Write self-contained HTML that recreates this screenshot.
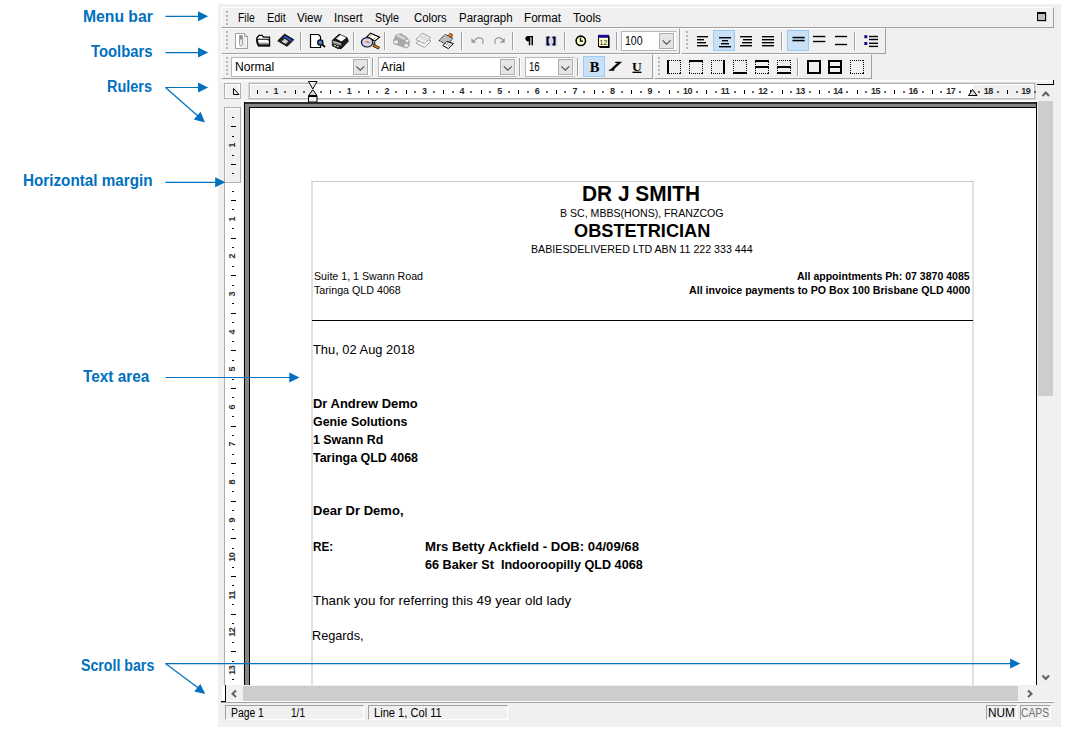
<!DOCTYPE html>
<html><head><meta charset="utf-8">
<style>
*{box-sizing:border-box}
html,body{margin:0;padding:0}
body{width:1065px;height:732px;background:#fff;position:relative;overflow:hidden;font-family:"Liberation Sans",sans-serif}
.a{position:absolute}
.tx{position:absolute;white-space:pre;line-height:1;transform-origin:0 0}
.hl{background:#fff}
.sh{background:#a0a0a0}
.grip{position:absolute;width:2px;}
</style></head><body>
<!-- app frame -->
<div class="a" style="left:218px;top:4px;width:843px;height:723px;background:#f0f0f0"></div>

<!-- menubar band -->
<div class="a" style="left:221px;top:7px;width:833px;height:21px;border-top:1px solid #fff;border-left:1px solid #fff;border-bottom:1px solid #a0a0a0;border-right:1px solid #a0a0a0"></div>
<!-- restore icon -->
<div class="a" style="left:1037px;top:12px;width:9px;height:9px;border:1px solid #000;border-top-width:2px;background:#bdbdbd;box-shadow:1px 1px 0 #c8c8c8"></div>

<!-- toolbar row1 -->
<div class="a" style="left:221px;top:28px;width:459px;height:26px;border-top:1px solid #fff;border-left:1px solid #fff;border-bottom:1px solid #a0a0a0;border-right:1px solid #a0a0a0"></div>
<div class="a" style="left:681px;top:28px;width:205px;height:26px;border-top:1px solid #fff;border-left:1px solid #fff;border-bottom:1px solid #a0a0a0;border-right:1px solid #a0a0a0"></div>
<!-- toolbar row2 -->
<div class="a" style="left:221px;top:54px;width:432px;height:25px;border-top:1px solid #fff;border-left:1px solid #fff;border-bottom:1px solid #a0a0a0;border-right:1px solid #a0a0a0"></div>
<div class="a" style="left:654px;top:54px;width:218px;height:25px;border-top:1px solid #fff;border-left:1px solid #fff;border-bottom:1px solid #a0a0a0;border-right:1px solid #a0a0a0"></div>

<div class="a" style="left:226px;top:11px;width:2px;height:2px;background:#b4b4b4;box-shadow:-1px 1px 0 #fafafa"></div>
<div class="a" style="left:226px;top:15px;width:2px;height:2px;background:#b4b4b4;box-shadow:-1px 1px 0 #fafafa"></div>
<div class="a" style="left:226px;top:19px;width:2px;height:2px;background:#b4b4b4;box-shadow:-1px 1px 0 #fafafa"></div>
<div class="a" style="left:226px;top:23px;width:2px;height:2px;background:#b4b4b4;box-shadow:-1px 1px 0 #fafafa"></div>
<div class="a" style="left:226px;top:31px;width:2px;height:2px;background:#b4b4b4;box-shadow:-1px 1px 0 #fafafa"></div>
<div class="a" style="left:226px;top:35px;width:2px;height:2px;background:#b4b4b4;box-shadow:-1px 1px 0 #fafafa"></div>
<div class="a" style="left:226px;top:39px;width:2px;height:2px;background:#b4b4b4;box-shadow:-1px 1px 0 #fafafa"></div>
<div class="a" style="left:226px;top:43px;width:2px;height:2px;background:#b4b4b4;box-shadow:-1px 1px 0 #fafafa"></div>
<div class="a" style="left:226px;top:47px;width:2px;height:2px;background:#b4b4b4;box-shadow:-1px 1px 0 #fafafa"></div>
<div class="a" style="left:686px;top:31px;width:2px;height:2px;background:#b4b4b4;box-shadow:-1px 1px 0 #fafafa"></div>
<div class="a" style="left:686px;top:35px;width:2px;height:2px;background:#b4b4b4;box-shadow:-1px 1px 0 #fafafa"></div>
<div class="a" style="left:686px;top:39px;width:2px;height:2px;background:#b4b4b4;box-shadow:-1px 1px 0 #fafafa"></div>
<div class="a" style="left:686px;top:43px;width:2px;height:2px;background:#b4b4b4;box-shadow:-1px 1px 0 #fafafa"></div>
<div class="a" style="left:686px;top:47px;width:2px;height:2px;background:#b4b4b4;box-shadow:-1px 1px 0 #fafafa"></div>
<div class="a" style="left:226px;top:57px;width:2px;height:2px;background:#b4b4b4;box-shadow:-1px 1px 0 #fafafa"></div>
<div class="a" style="left:226px;top:61px;width:2px;height:2px;background:#b4b4b4;box-shadow:-1px 1px 0 #fafafa"></div>
<div class="a" style="left:226px;top:65px;width:2px;height:2px;background:#b4b4b4;box-shadow:-1px 1px 0 #fafafa"></div>
<div class="a" style="left:226px;top:69px;width:2px;height:2px;background:#b4b4b4;box-shadow:-1px 1px 0 #fafafa"></div>
<div class="a" style="left:226px;top:73px;width:2px;height:2px;background:#b4b4b4;box-shadow:-1px 1px 0 #fafafa"></div>
<div class="a" style="left:658px;top:57px;width:2px;height:2px;background:#b4b4b4;box-shadow:-1px 1px 0 #fafafa"></div>
<div class="a" style="left:658px;top:61px;width:2px;height:2px;background:#b4b4b4;box-shadow:-1px 1px 0 #fafafa"></div>
<div class="a" style="left:658px;top:65px;width:2px;height:2px;background:#b4b4b4;box-shadow:-1px 1px 0 #fafafa"></div>
<div class="a" style="left:658px;top:69px;width:2px;height:2px;background:#b4b4b4;box-shadow:-1px 1px 0 #fafafa"></div>
<div class="a" style="left:658px;top:73px;width:2px;height:2px;background:#b4b4b4;box-shadow:-1px 1px 0 #fafafa"></div>

<!-- separators -->
<div class="a" style="left:300px;top:32px;width:1px;height:18px;background:#a0a0a0"></div><div class="a" style="left:301px;top:32px;width:1px;height:18px;background:#fff"></div>
<div class="a" style="left:353px;top:32px;width:1px;height:18px;background:#a0a0a0"></div><div class="a" style="left:354px;top:32px;width:1px;height:18px;background:#fff"></div>
<div class="a" style="left:384px;top:32px;width:1px;height:18px;background:#a0a0a0"></div><div class="a" style="left:385px;top:32px;width:1px;height:18px;background:#fff"></div>
<div class="a" style="left:461px;top:32px;width:1px;height:18px;background:#a0a0a0"></div><div class="a" style="left:462px;top:32px;width:1px;height:18px;background:#fff"></div>
<div class="a" style="left:512px;top:32px;width:1px;height:18px;background:#a0a0a0"></div><div class="a" style="left:513px;top:32px;width:1px;height:18px;background:#fff"></div>
<div class="a" style="left:564px;top:32px;width:1px;height:18px;background:#a0a0a0"></div><div class="a" style="left:565px;top:32px;width:1px;height:18px;background:#fff"></div>
<div class="a" style="left:616px;top:32px;width:1px;height:18px;background:#a0a0a0"></div><div class="a" style="left:617px;top:32px;width:1px;height:18px;background:#fff"></div>
<div class="a" style="left:781px;top:32px;width:1px;height:18px;background:#a0a0a0"></div><div class="a" style="left:782px;top:32px;width:1px;height:18px;background:#fff"></div>
<div class="a" style="left:854px;top:32px;width:1px;height:18px;background:#a0a0a0"></div><div class="a" style="left:855px;top:32px;width:1px;height:18px;background:#fff"></div>
<div class="a" style="left:372px;top:58px;width:1px;height:18px;background:#a0a0a0"></div><div class="a" style="left:373px;top:58px;width:1px;height:18px;background:#fff"></div>
<div class="a" style="left:519px;top:58px;width:1px;height:18px;background:#a0a0a0"></div><div class="a" style="left:520px;top:58px;width:1px;height:18px;background:#fff"></div>
<div class="a" style="left:577px;top:58px;width:1px;height:18px;background:#a0a0a0"></div><div class="a" style="left:578px;top:58px;width:1px;height:18px;background:#fff"></div>
<div class="a" style="left:797px;top:58px;width:1px;height:18px;background:#a0a0a0"></div><div class="a" style="left:798px;top:58px;width:1px;height:18px;background:#fff"></div>

<!-- combos -->
<div class="a" style="left:621px;top:31px;width:56px;height:20px;background:#fff;border:1px solid #b4b8c0;border-right-color:#e8e8e8"></div>
<div class="a" style="left:659px;top:33px;width:15px;height:16px;background:#e5e5e5;border:1px solid #adadad"></div>

<div class="a" style="left:231px;top:57px;width:140px;height:20px;background:#fff;border:1px solid #b4b8c0;border-right-color:#e8e8e8"></div>
<div class="a" style="left:353px;top:59px;width:15px;height:16px;background:#e5e5e5;border:1px solid #adadad"></div>
<div class="a" style="left:378px;top:57px;width:139px;height:20px;background:#fff;border:1px solid #b4b8c0;border-right-color:#e8e8e8"></div>
<div class="a" style="left:500px;top:59px;width:15px;height:16px;background:#e5e5e5;border:1px solid #adadad"></div>
<div class="a" style="left:525px;top:57px;width:50px;height:20px;background:#fff;border:1px solid #b4b8c0;border-right-color:#e8e8e8"></div>
<div class="a" style="left:558px;top:59px;width:15px;height:16px;background:#e5e5e5;border:1px solid #adadad"></div>
<svg class="a" style="left:0;top:0" width="1065" height="100">
 <g fill="none" stroke="#505050" stroke-width="1.1">
  <polyline points="662.6,40.3 666.6,44.2 670.6,40.3"/>
  <polyline points="356.3,66.3 360.3,70.2 364.3,66.3"/>
  <polyline points="503.8,66.3 507.8,70.2 511.8,66.3"/>
  <polyline points="561.3,66.3 565.3,70.2 569.3,66.3"/>
 </g>
</svg>

<!-- pressed buttons -->
<div class="a" style="left:713px;top:30px;width:22px;height:21px;background:#c9e0f7;border:1px solid #99ccf5"></div>
<div class="a" style="left:787px;top:30px;width:22px;height:21px;background:#c9e0f7;border:1px solid #99ccf5"></div>
<div class="a" style="left:583px;top:56px;width:22px;height:21px;background:#c9e0f7;border:1px solid #99ccf5"></div>

<svg class="a" style="left:0;top:0" width="1065" height="110" shape-rendering="geometricPrecision">
 <!-- new doc -->
 <path d="M235.5,33.5 H244.5 L247.5,36.5 V48.5 H235.5 Z" fill="#fff" stroke="#a0a0a0"/>
 <path d="M244.5,33.5 V36.5 H247.5" fill="none" stroke="#a0a0a0"/>
 <rect x="243" y="37" width="3.5" height="11" fill="#ececec"/>
 <path d="M239.5,35.5 H242.5 V44.5 L241,46.5 L239.5,44.5 Z" fill="#e8e8e8" stroke="#a0a0a0"/>
 <rect x="240" y="36" width="2" height="3.5" fill="#909090"/>
 <!-- open folder -->
 <path d="M256.8,38 L259,35.3 H262 L263.5,37.2 H269.5 V45.8 H258.5 L256.8,42 Z" fill="#fff" stroke="#000" stroke-width="1.3"/>
 <defs><linearGradient id="fg" x1="0" y1="0" x2="0" y2="1"><stop offset="0.4" stop-color="#fff"/><stop offset="1" stop-color="#000"/></linearGradient>
 <linearGradient id="fg2" x1="0" y1="0" x2="0" y2="1"><stop offset="0" stop-color="#ffffff"/><stop offset="1" stop-color="#202020"/></linearGradient></defs>
 <path d="M257.3,39.3 H268 L269.5,41 V45.8 H258.5 Z" fill="url(#fg)" stroke="#000" stroke-width="1.1"/>
 <!-- save disk -->
 <path d="M277.8,40.8 L284.5,34.2 L293.7,39.7 L287.1,46.3 Z" fill="#222" stroke="#000" stroke-width="1"/>
 <path d="M284.6,35.8 L292,40.2 L291,41.2 L283.6,36.8 Z" fill="#2a5cff"/>
 <path d="M281.5,41.5 L284.5,38.8 L288.5,41.3 L285.6,44 Z" fill="#ccc"/>
 <!-- print preview -->
 <path d="M310.5,34.5 H318.5 L320.5,36.5 V47.5 H310.5 Z" fill="#fff" stroke="#000" stroke-width="1.2"/>
 <circle cx="320.3" cy="42.4" r="2.6" fill="#4a78d8" stroke="#000" stroke-width="1.2"/>
 <line x1="322.2" y1="44.3" x2="325" y2="47" stroke="#000" stroke-width="1.8"/>
 <!-- printer -->
 <path d="M332.3,40.2 L339.2,34.2 L347.2,37.8 L348.3,41.3 L341.4,48.6 L338,48.6 L332.3,45.7 Z" fill="#1a1a1a" stroke="#000" stroke-width=".8"/>
 <path d="M332.6,40.4 L341.3,43.2 L341.3,46 L332.6,43.4 Z" fill="#8a8a8a"/>
 <path d="M333.5,41.5 L340.5,43.8" stroke="#d8d8d8" stroke-width=".8"/>
 <path d="M336,38.6 L340.6,34.9 L346.2,37.7 L341.5,41.4 Z" fill="#fff"/>
 <path d="M334,45.3 L335.8,46 M336.8,46.2 L338.6,46.9" stroke="#e8e8e8" stroke-width="1.2"/>
 <!-- find -->
 <path d="M367,36.6 L370.6,33.2 L379.6,37.2 L374.8,41.1 Z" fill="#fff" stroke="#000" stroke-width="1.1"/>
 <rect x="370" y="34.9" width="1.3" height="1.3" fill="#f09010"/><rect x="373.8" y="37.8" width="1.3" height="1.3" fill="#f09010"/>
 <path d="M374.5,42 V45" stroke="#444" stroke-width="1.8"/>
 <ellipse cx="367.1" cy="42.3" rx="5.7" ry="4.7" fill="#c8c8f6" stroke="#111" stroke-width="1.2"/>
 <path d="M363,40.2 H371 M363,44.2 H371" stroke="#ececff" stroke-width=".8"/>
 <path d="M366,41.3 L369.3,42.8" stroke="#f08a10" stroke-width="1.5"/>
 <path d="M373,45.2 L379.3,48.3" stroke="#000" stroke-width="2.8"/>
 <path d="M373.3,45.3 L379,48.1" stroke="#f08a10" stroke-width="1.4"/>
 <!-- cut (gray) -->
 <path d="M396,34.3 L401,33.3 L407,37 L409.8,41.2 L409.8,45.8 L406.5,48.5 L400.5,46.5 L393.3,43.8 L393.3,39.8 Z" fill="#a8a8a8"/>
 <path d="M396.5,35.5 L404.5,39.5 M397.5,34.5 L405.5,38.5" stroke="#f0f0f0" stroke-width=".9"/>
 <ellipse cx="396" cy="42" rx="2.6" ry="2.1" fill="#f0f0f0" stroke="#a0a0a0" stroke-width=".8"/>
 <ellipse cx="406.2" cy="45.5" rx="2.4" ry="2" fill="#f0f0f0" stroke="#a0a0a0" stroke-width=".8"/>
 <ellipse cx="407" cy="41" rx="1.5" ry="1.2" fill="#f0f0f0"/>
 <!-- copy (gray) -->
 <path d="M416,43.2 L422.5,37 L431,41 L424.5,47.5 Z" fill="#f4f4f4" stroke="#a0a0a0" stroke-width="1"/>
 <path d="M416,39.5 L422.2,33.2 L430.7,37.4 L424.3,43.6 Z" fill="#f4f4f4" stroke="#a0a0a0" stroke-width="1"/>
 <path d="M420,38.3 L423,35.6 M421.8,39.6 L425.6,36.3 M423.5,41 L427.5,37.5" stroke="#b0b0b0" stroke-width=".9"/>
 <!-- paste -->
 <path d="M439,40.5 L445.1,34.3 L453,38.4 L446.9,44.8 Z" fill="#bdbdbd" stroke="#111" stroke-width="1" stroke-dasharray="1.2 .6"/>
 <path d="M448.3,35.5 L450,33.2 L452.6,34.6 L451.8,37.3 L449.5,36.8 Z" fill="#f07a10" stroke="#301000" stroke-width=".6"/>
 <path d="M442.8,45.6 L446.9,41.5 L453.4,43.5 L448.4,48.6 Z" fill="#fff" stroke="#000" stroke-width="1"/>
 <path d="M446,45.2 L448.5,42.8 M448,46.3 L450.6,43.8" stroke="#555" stroke-width=".8"/>
 <!-- undo/redo gray -->
 <g fill="none" stroke="#999" stroke-width="1.15">
  <path d="M474,41 C477,37 481,36.5 483,40 C483.5,41.5 483,42.8 482.3,43.8"/>
  <path d="M504,41 C501,37 497,36.5 495,40 C494.5,41.5 495,42.8 495.7,43.8"/>
 </g>
 <path d="M471.4,37.9 V42.8 H476.4 Z" fill="#999"/>
 <path d="M504.7,37.9 V42.8 H499.7 Z" fill="#999"/>
 <!-- pilcrow -->
 <path d="M527.5,36 H533 V45.2 H531.5 V37.3 H530.3 V45.2 H528.8 V41.3 A2.7,2.65 0 0 1 527.5,36 Z" fill="#000"/>
 <!-- brackets -->
 <rect x="545" y="36" width="12" height="10" fill="#d4d4ff"/>
 <path d="M549.5,37.5 H547.5 V44.5 H549.5 M552.5,37.5 H554.5 V44.5 H552.5" fill="none" stroke="#000" stroke-width="2"/>
 <!-- clock -->
 <circle cx="580.8" cy="40.8" r="4.7" fill="#ffffc8" stroke="#000" stroke-width="1.6"/>
 <path d="M580.5,37.8 V41.2 H583" fill="none" stroke="#000" stroke-width="1.3"/>
 <!-- calendar -->
 <rect x="598.5" y="35.5" width="10" height="11" fill="#ffffc8" stroke="#000"/>
 <rect x="598" y="34.8" width="11" height="3" fill="#1e0a98"/>
 <path d="M609,36 V47.5 H599.5" fill="none" stroke="#000" stroke-width="1.2"/>
 <text x="603.5" y="45" font-family="Liberation Sans" font-size="7" text-anchor="middle" fill="#222">12</text>
 <!-- align icons -->
 <g fill="#000">
  <rect x="697" y="36" width="11" height="1.4"/><rect x="697" y="39" width="7" height="1.4"/><rect x="697" y="42" width="9" height="1.4"/><rect x="697" y="45" width="11" height="1.4"/>
  <rect x="719" y="37" width="12" height="1.4"/><rect x="722" y="40" width="6" height="1.4"/><rect x="721" y="43" width="8" height="1.4"/><rect x="719" y="46" width="12" height="1.4"/>
  <rect x="740" y="36" width="12" height="1.4"/><rect x="743" y="39" width="9" height="1.4"/><rect x="742" y="42" width="10" height="1.4"/><rect x="740" y="45" width="12" height="1.4"/>
  <rect x="762" y="36" width="12" height="1.4"/><rect x="762" y="39" width="12" height="1.4"/><rect x="762" y="42" width="12" height="1.4"/><rect x="762" y="45" width="12" height="1.4"/>
  <rect x="792.5" y="36.8" width="12.2" height="1.5"/><rect x="792.5" y="39.8" width="12.2" height="1.5"/>
  <rect x="813" y="35.8" width="12.3" height="1.4"/><rect x="813" y="40.8" width="12.3" height="1.4"/>
  <rect x="835" y="35.8" width="12" height="1.4"/><rect x="835" y="43.8" width="12" height="1.4"/>
  <rect x="869" y="35.8" width="9" height="1.4"/><rect x="869" y="38.8" width="9" height="1.4"/><rect x="869" y="42.6" width="9" height="1.4"/><rect x="869" y="45.7" width="9" height="1.4"/>
 </g>
 <rect x="864.3" y="35.2" width="3" height="3" fill="#1a0a8a"/><rect x="864.3" y="42" width="3" height="3" fill="#1a0a8a"/>
 <!-- B I U -->
 <text x="594.6" y="71.8" font-family="Liberation Serif" font-weight="bold" font-size="14.5" text-anchor="middle" fill="#000">B</text>
 <path d="M615.3,61.7 H621.7 L621.2,63 H620.8 L613.8,69.6 H614.6 L614.2,70.8 H608.7 L609.2,69.6 H610.3 L617.3,63 H615 Z" fill="#000"/>
 <text x="636.8" y="70.8" font-family="Liberation Serif" font-weight="bold" font-size="13.5" text-anchor="middle" fill="#000">U</text>
 <rect x="632.5" y="71.6" width="9" height="1.4" fill="#000"/>
 <!-- border icons -->
 <g shape-rendering="crispEdges"><rect x="667" y="60" width="1" height="1" fill="#000"/><rect x="667" y="73" width="1" height="1" fill="#000"/><rect x="667" y="60" width="1" height="1" fill="#000"/><rect x="680" y="60" width="1" height="1" fill="#000"/><rect x="669" y="60" width="1" height="1" fill="#000"/><rect x="669" y="73" width="1" height="1" fill="#000"/><rect x="667" y="62" width="1" height="1" fill="#000"/><rect x="680" y="62" width="1" height="1" fill="#000"/><rect x="671" y="60" width="1" height="1" fill="#000"/><rect x="671" y="73" width="1" height="1" fill="#000"/><rect x="667" y="64" width="1" height="1" fill="#000"/><rect x="680" y="64" width="1" height="1" fill="#000"/><rect x="673" y="60" width="1" height="1" fill="#000"/><rect x="673" y="73" width="1" height="1" fill="#000"/><rect x="667" y="66" width="1" height="1" fill="#000"/><rect x="680" y="66" width="1" height="1" fill="#000"/><rect x="675" y="60" width="1" height="1" fill="#000"/><rect x="675" y="73" width="1" height="1" fill="#000"/><rect x="667" y="68" width="1" height="1" fill="#000"/><rect x="680" y="68" width="1" height="1" fill="#000"/><rect x="677" y="60" width="1" height="1" fill="#000"/><rect x="677" y="73" width="1" height="1" fill="#000"/><rect x="667" y="70" width="1" height="1" fill="#000"/><rect x="680" y="70" width="1" height="1" fill="#000"/><rect x="679" y="60" width="1" height="1" fill="#000"/><rect x="679" y="73" width="1" height="1" fill="#000"/><rect x="667" y="72" width="1" height="1" fill="#000"/><rect x="680" y="72" width="1" height="1" fill="#000"/><rect x="680" y="73" width="1" height="1" fill="#000"/><rect x="667" y="60" width="2" height="14" fill="#000"/><rect x="689" y="60" width="1" height="1" fill="#000"/><rect x="689" y="73" width="1" height="1" fill="#000"/><rect x="689" y="60" width="1" height="1" fill="#000"/><rect x="702" y="60" width="1" height="1" fill="#000"/><rect x="691" y="60" width="1" height="1" fill="#000"/><rect x="691" y="73" width="1" height="1" fill="#000"/><rect x="689" y="62" width="1" height="1" fill="#000"/><rect x="702" y="62" width="1" height="1" fill="#000"/><rect x="693" y="60" width="1" height="1" fill="#000"/><rect x="693" y="73" width="1" height="1" fill="#000"/><rect x="689" y="64" width="1" height="1" fill="#000"/><rect x="702" y="64" width="1" height="1" fill="#000"/><rect x="695" y="60" width="1" height="1" fill="#000"/><rect x="695" y="73" width="1" height="1" fill="#000"/><rect x="689" y="66" width="1" height="1" fill="#000"/><rect x="702" y="66" width="1" height="1" fill="#000"/><rect x="697" y="60" width="1" height="1" fill="#000"/><rect x="697" y="73" width="1" height="1" fill="#000"/><rect x="689" y="68" width="1" height="1" fill="#000"/><rect x="702" y="68" width="1" height="1" fill="#000"/><rect x="699" y="60" width="1" height="1" fill="#000"/><rect x="699" y="73" width="1" height="1" fill="#000"/><rect x="689" y="70" width="1" height="1" fill="#000"/><rect x="702" y="70" width="1" height="1" fill="#000"/><rect x="701" y="60" width="1" height="1" fill="#000"/><rect x="701" y="73" width="1" height="1" fill="#000"/><rect x="689" y="72" width="1" height="1" fill="#000"/><rect x="702" y="72" width="1" height="1" fill="#000"/><rect x="702" y="73" width="1" height="1" fill="#000"/><rect x="689" y="60" width="14" height="2" fill="#000"/><rect x="711" y="60" width="1" height="1" fill="#000"/><rect x="711" y="73" width="1" height="1" fill="#000"/><rect x="711" y="60" width="1" height="1" fill="#000"/><rect x="724" y="60" width="1" height="1" fill="#000"/><rect x="713" y="60" width="1" height="1" fill="#000"/><rect x="713" y="73" width="1" height="1" fill="#000"/><rect x="711" y="62" width="1" height="1" fill="#000"/><rect x="724" y="62" width="1" height="1" fill="#000"/><rect x="715" y="60" width="1" height="1" fill="#000"/><rect x="715" y="73" width="1" height="1" fill="#000"/><rect x="711" y="64" width="1" height="1" fill="#000"/><rect x="724" y="64" width="1" height="1" fill="#000"/><rect x="717" y="60" width="1" height="1" fill="#000"/><rect x="717" y="73" width="1" height="1" fill="#000"/><rect x="711" y="66" width="1" height="1" fill="#000"/><rect x="724" y="66" width="1" height="1" fill="#000"/><rect x="719" y="60" width="1" height="1" fill="#000"/><rect x="719" y="73" width="1" height="1" fill="#000"/><rect x="711" y="68" width="1" height="1" fill="#000"/><rect x="724" y="68" width="1" height="1" fill="#000"/><rect x="721" y="60" width="1" height="1" fill="#000"/><rect x="721" y="73" width="1" height="1" fill="#000"/><rect x="711" y="70" width="1" height="1" fill="#000"/><rect x="724" y="70" width="1" height="1" fill="#000"/><rect x="723" y="60" width="1" height="1" fill="#000"/><rect x="723" y="73" width="1" height="1" fill="#000"/><rect x="711" y="72" width="1" height="1" fill="#000"/><rect x="724" y="72" width="1" height="1" fill="#000"/><rect x="724" y="73" width="1" height="1" fill="#000"/><rect x="723" y="60" width="2" height="14" fill="#000"/><rect x="733" y="60" width="1" height="1" fill="#000"/><rect x="733" y="73" width="1" height="1" fill="#000"/><rect x="733" y="60" width="1" height="1" fill="#000"/><rect x="746" y="60" width="1" height="1" fill="#000"/><rect x="735" y="60" width="1" height="1" fill="#000"/><rect x="735" y="73" width="1" height="1" fill="#000"/><rect x="733" y="62" width="1" height="1" fill="#000"/><rect x="746" y="62" width="1" height="1" fill="#000"/><rect x="737" y="60" width="1" height="1" fill="#000"/><rect x="737" y="73" width="1" height="1" fill="#000"/><rect x="733" y="64" width="1" height="1" fill="#000"/><rect x="746" y="64" width="1" height="1" fill="#000"/><rect x="739" y="60" width="1" height="1" fill="#000"/><rect x="739" y="73" width="1" height="1" fill="#000"/><rect x="733" y="66" width="1" height="1" fill="#000"/><rect x="746" y="66" width="1" height="1" fill="#000"/><rect x="741" y="60" width="1" height="1" fill="#000"/><rect x="741" y="73" width="1" height="1" fill="#000"/><rect x="733" y="68" width="1" height="1" fill="#000"/><rect x="746" y="68" width="1" height="1" fill="#000"/><rect x="743" y="60" width="1" height="1" fill="#000"/><rect x="743" y="73" width="1" height="1" fill="#000"/><rect x="733" y="70" width="1" height="1" fill="#000"/><rect x="746" y="70" width="1" height="1" fill="#000"/><rect x="745" y="60" width="1" height="1" fill="#000"/><rect x="745" y="73" width="1" height="1" fill="#000"/><rect x="733" y="72" width="1" height="1" fill="#000"/><rect x="746" y="72" width="1" height="1" fill="#000"/><rect x="746" y="73" width="1" height="1" fill="#000"/><rect x="733" y="72" width="14" height="2" fill="#000"/><rect x="755" y="60" width="1" height="1" fill="#000"/><rect x="755" y="73" width="1" height="1" fill="#000"/><rect x="755" y="60" width="1" height="1" fill="#000"/><rect x="768" y="60" width="1" height="1" fill="#000"/><rect x="757" y="60" width="1" height="1" fill="#000"/><rect x="757" y="73" width="1" height="1" fill="#000"/><rect x="755" y="62" width="1" height="1" fill="#000"/><rect x="768" y="62" width="1" height="1" fill="#000"/><rect x="759" y="60" width="1" height="1" fill="#000"/><rect x="759" y="73" width="1" height="1" fill="#000"/><rect x="755" y="64" width="1" height="1" fill="#000"/><rect x="768" y="64" width="1" height="1" fill="#000"/><rect x="761" y="60" width="1" height="1" fill="#000"/><rect x="761" y="73" width="1" height="1" fill="#000"/><rect x="755" y="66" width="1" height="1" fill="#000"/><rect x="768" y="66" width="1" height="1" fill="#000"/><rect x="763" y="60" width="1" height="1" fill="#000"/><rect x="763" y="73" width="1" height="1" fill="#000"/><rect x="755" y="68" width="1" height="1" fill="#000"/><rect x="768" y="68" width="1" height="1" fill="#000"/><rect x="765" y="60" width="1" height="1" fill="#000"/><rect x="765" y="73" width="1" height="1" fill="#000"/><rect x="755" y="70" width="1" height="1" fill="#000"/><rect x="768" y="70" width="1" height="1" fill="#000"/><rect x="767" y="60" width="1" height="1" fill="#000"/><rect x="767" y="73" width="1" height="1" fill="#000"/><rect x="755" y="72" width="1" height="1" fill="#000"/><rect x="768" y="72" width="1" height="1" fill="#000"/><rect x="768" y="73" width="1" height="1" fill="#000"/><rect x="755" y="60" width="14" height="2" fill="#000"/><rect x="755" y="66" width="14" height="2" fill="#000"/><rect x="777" y="60" width="1" height="1" fill="#000"/><rect x="777" y="73" width="1" height="1" fill="#000"/><rect x="777" y="60" width="1" height="1" fill="#000"/><rect x="790" y="60" width="1" height="1" fill="#000"/><rect x="779" y="60" width="1" height="1" fill="#000"/><rect x="779" y="73" width="1" height="1" fill="#000"/><rect x="777" y="62" width="1" height="1" fill="#000"/><rect x="790" y="62" width="1" height="1" fill="#000"/><rect x="781" y="60" width="1" height="1" fill="#000"/><rect x="781" y="73" width="1" height="1" fill="#000"/><rect x="777" y="64" width="1" height="1" fill="#000"/><rect x="790" y="64" width="1" height="1" fill="#000"/><rect x="783" y="60" width="1" height="1" fill="#000"/><rect x="783" y="73" width="1" height="1" fill="#000"/><rect x="777" y="66" width="1" height="1" fill="#000"/><rect x="790" y="66" width="1" height="1" fill="#000"/><rect x="785" y="60" width="1" height="1" fill="#000"/><rect x="785" y="73" width="1" height="1" fill="#000"/><rect x="777" y="68" width="1" height="1" fill="#000"/><rect x="790" y="68" width="1" height="1" fill="#000"/><rect x="787" y="60" width="1" height="1" fill="#000"/><rect x="787" y="73" width="1" height="1" fill="#000"/><rect x="777" y="70" width="1" height="1" fill="#000"/><rect x="790" y="70" width="1" height="1" fill="#000"/><rect x="789" y="60" width="1" height="1" fill="#000"/><rect x="789" y="73" width="1" height="1" fill="#000"/><rect x="777" y="72" width="1" height="1" fill="#000"/><rect x="790" y="72" width="1" height="1" fill="#000"/><rect x="790" y="73" width="1" height="1" fill="#000"/><rect x="777" y="66" width="14" height="2" fill="#000"/><rect x="777" y="72" width="14" height="2" fill="#000"/><rect x="807" y="60" width="14" height="2" fill="#000"/><rect x="807" y="72" width="14" height="2" fill="#000"/><rect x="807" y="60" width="2" height="14" fill="#000"/><rect x="819" y="60" width="2" height="14" fill="#000"/><rect x="828" y="60" width="14" height="2" fill="#000"/><rect x="828" y="72" width="14" height="2" fill="#000"/><rect x="828" y="60" width="2" height="14" fill="#000"/><rect x="840" y="60" width="2" height="14" fill="#000"/><rect x="828" y="66" width="14" height="2" fill="#000"/><rect x="850" y="60" width="1" height="1" fill="#000"/><rect x="850" y="73" width="1" height="1" fill="#000"/><rect x="850" y="60" width="1" height="1" fill="#000"/><rect x="863" y="60" width="1" height="1" fill="#000"/><rect x="852" y="60" width="1" height="1" fill="#000"/><rect x="852" y="73" width="1" height="1" fill="#000"/><rect x="850" y="62" width="1" height="1" fill="#000"/><rect x="863" y="62" width="1" height="1" fill="#000"/><rect x="854" y="60" width="1" height="1" fill="#000"/><rect x="854" y="73" width="1" height="1" fill="#000"/><rect x="850" y="64" width="1" height="1" fill="#000"/><rect x="863" y="64" width="1" height="1" fill="#000"/><rect x="856" y="60" width="1" height="1" fill="#000"/><rect x="856" y="73" width="1" height="1" fill="#000"/><rect x="850" y="66" width="1" height="1" fill="#000"/><rect x="863" y="66" width="1" height="1" fill="#000"/><rect x="858" y="60" width="1" height="1" fill="#000"/><rect x="858" y="73" width="1" height="1" fill="#000"/><rect x="850" y="68" width="1" height="1" fill="#000"/><rect x="863" y="68" width="1" height="1" fill="#000"/><rect x="860" y="60" width="1" height="1" fill="#000"/><rect x="860" y="73" width="1" height="1" fill="#000"/><rect x="850" y="70" width="1" height="1" fill="#000"/><rect x="863" y="70" width="1" height="1" fill="#000"/><rect x="862" y="60" width="1" height="1" fill="#000"/><rect x="862" y="73" width="1" height="1" fill="#000"/><rect x="850" y="72" width="1" height="1" fill="#000"/><rect x="863" y="72" width="1" height="1" fill="#000"/><rect x="863" y="73" width="1" height="1" fill="#000"/></g>
</svg>


<!-- ruler row -->
<div class="a" style="left:224px;top:83px;width:17px;height:16px;border:1px solid #b0b0b0;box-shadow:inset 0 0 0 1px #fff;background:#f0f0f0"></div>
<svg class="a" style="left:0;top:0" width="260" height="100"><path d="M233.5,88.5 L233.5,94.5 L239,94.5 Z" fill="#f0f0f0" stroke="#000" stroke-width="1"/></svg>
<div class="a" style="left:221px;top:80px;width:833px;height:2px;background:#fafafa"></div>
<div class="a" style="left:249px;top:83px;width:786px;height:16px;border:1px solid #b4b6ba;box-shadow:inset 0 0 0 1px #fff,0 0 0 1px #d8d8dc;background:#fff"></div>
<div class="a" style="left:251px;top:85px;width:61px;height:12px;background:#f0f0f0"></div>
<div class="a" style="left:973px;top:85px;width:60px;height:12px;background:#f0f0f0"></div>

<!-- vertical ruler -->
<div class="a" style="left:224px;top:107px;width:17px;height:578px;border-left:1px solid #a8acb4;border-top:1px solid #b0b0b0;background:#fff"></div>
<div class="a" style="left:225px;top:108px;width:16px;height:75px;border-right:1px solid #b0b0b0;border-bottom:1px solid #b0b0b0;box-shadow:inset 1px 1px 0 #fff;background:#f0f0f0"></div>
<div class="a" style="left:241px;top:100px;width:796px;height:2px;background:#fafafa"></div>
<div class="a" style="left:241px;top:100px;width:2px;height:585px;background:#fafafa"></div>
<div class="a" style="left:257px;top:90px;width:1px;height:4px;background:#000"></div>
<div class="a" style="left:266px;top:91px;width:2px;height:2px;background:#666"></div>
<div class="tx" style="left:261.00px;top:87.35px;width:30px;text-align:center;font-size:9px;font-weight:bold;letter-spacing:-0.5px;text-indent:-0.5px;color:#2a2a2a">1</div>
<div class="a" style="left:284px;top:91px;width:2px;height:2px;background:#666"></div>
<div class="a" style="left:295px;top:90px;width:1px;height:4px;background:#000"></div>
<div class="a" style="left:303px;top:91px;width:2px;height:2px;background:#666"></div>
<div class="a" style="left:320px;top:91px;width:2px;height:2px;background:#666"></div>
<div class="a" style="left:330px;top:90px;width:1px;height:4px;background:#000"></div>
<div class="a" style="left:339px;top:91px;width:2px;height:2px;background:#666"></div>
<div class="tx" style="left:334.30px;top:87.35px;width:30px;text-align:center;font-size:9px;font-weight:bold;letter-spacing:-0.5px;text-indent:-0.5px;color:#2a2a2a">1</div>
<div class="a" style="left:358px;top:91px;width:2px;height:2px;background:#666"></div>
<div class="a" style="left:368px;top:90px;width:1px;height:4px;background:#000"></div>
<div class="a" style="left:376px;top:91px;width:2px;height:2px;background:#666"></div>
<div class="tx" style="left:371.90px;top:87.35px;width:30px;text-align:center;font-size:9px;font-weight:bold;letter-spacing:-0.5px;text-indent:-0.5px;color:#2a2a2a">2</div>
<div class="a" style="left:395px;top:91px;width:2px;height:2px;background:#666"></div>
<div class="a" style="left:406px;top:90px;width:1px;height:4px;background:#000"></div>
<div class="a" style="left:414px;top:91px;width:2px;height:2px;background:#666"></div>
<div class="tx" style="left:409.50px;top:87.35px;width:30px;text-align:center;font-size:9px;font-weight:bold;letter-spacing:-0.5px;text-indent:-0.5px;color:#2a2a2a">3</div>
<div class="a" style="left:433px;top:91px;width:2px;height:2px;background:#666"></div>
<div class="a" style="left:443px;top:90px;width:1px;height:4px;background:#000"></div>
<div class="a" style="left:452px;top:91px;width:2px;height:2px;background:#666"></div>
<div class="tx" style="left:447.10px;top:87.35px;width:30px;text-align:center;font-size:9px;font-weight:bold;letter-spacing:-0.5px;text-indent:-0.5px;color:#2a2a2a">4</div>
<div class="a" style="left:470px;top:91px;width:2px;height:2px;background:#666"></div>
<div class="a" style="left:481px;top:90px;width:1px;height:4px;background:#000"></div>
<div class="a" style="left:489px;top:91px;width:2px;height:2px;background:#666"></div>
<div class="tx" style="left:484.70px;top:87.35px;width:30px;text-align:center;font-size:9px;font-weight:bold;letter-spacing:-0.5px;text-indent:-0.5px;color:#2a2a2a">5</div>
<div class="a" style="left:508px;top:91px;width:2px;height:2px;background:#666"></div>
<div class="a" style="left:518px;top:90px;width:1px;height:4px;background:#000"></div>
<div class="a" style="left:527px;top:91px;width:2px;height:2px;background:#666"></div>
<div class="tx" style="left:522.30px;top:87.35px;width:30px;text-align:center;font-size:9px;font-weight:bold;letter-spacing:-0.5px;text-indent:-0.5px;color:#2a2a2a">6</div>
<div class="a" style="left:546px;top:91px;width:2px;height:2px;background:#666"></div>
<div class="a" style="left:556px;top:90px;width:1px;height:4px;background:#000"></div>
<div class="a" style="left:564px;top:91px;width:2px;height:2px;background:#666"></div>
<div class="tx" style="left:559.90px;top:87.35px;width:30px;text-align:center;font-size:9px;font-weight:bold;letter-spacing:-0.5px;text-indent:-0.5px;color:#2a2a2a">7</div>
<div class="a" style="left:583px;top:91px;width:2px;height:2px;background:#666"></div>
<div class="a" style="left:594px;top:90px;width:1px;height:4px;background:#000"></div>
<div class="a" style="left:602px;top:91px;width:2px;height:2px;background:#666"></div>
<div class="tx" style="left:597.50px;top:87.35px;width:30px;text-align:center;font-size:9px;font-weight:bold;letter-spacing:-0.5px;text-indent:-0.5px;color:#2a2a2a">8</div>
<div class="a" style="left:621px;top:91px;width:2px;height:2px;background:#666"></div>
<div class="a" style="left:631px;top:90px;width:1px;height:4px;background:#000"></div>
<div class="a" style="left:640px;top:91px;width:2px;height:2px;background:#666"></div>
<div class="tx" style="left:635.10px;top:87.35px;width:30px;text-align:center;font-size:9px;font-weight:bold;letter-spacing:-0.5px;text-indent:-0.5px;color:#2a2a2a">9</div>
<div class="a" style="left:658px;top:91px;width:2px;height:2px;background:#666"></div>
<div class="a" style="left:669px;top:90px;width:1px;height:4px;background:#000"></div>
<div class="a" style="left:677px;top:91px;width:2px;height:2px;background:#666"></div>
<div class="tx" style="left:672.70px;top:87.35px;width:30px;text-align:center;font-size:9px;font-weight:bold;letter-spacing:-0.5px;text-indent:-0.5px;color:#2a2a2a">10</div>
<div class="a" style="left:696px;top:91px;width:2px;height:2px;background:#666"></div>
<div class="a" style="left:706px;top:90px;width:1px;height:4px;background:#000"></div>
<div class="a" style="left:715px;top:91px;width:2px;height:2px;background:#666"></div>
<div class="tx" style="left:710.30px;top:87.35px;width:30px;text-align:center;font-size:9px;font-weight:bold;letter-spacing:-0.5px;text-indent:-0.5px;color:#2a2a2a">11</div>
<div class="a" style="left:734px;top:91px;width:2px;height:2px;background:#666"></div>
<div class="a" style="left:744px;top:90px;width:1px;height:4px;background:#000"></div>
<div class="a" style="left:752px;top:91px;width:2px;height:2px;background:#666"></div>
<div class="tx" style="left:747.90px;top:87.35px;width:30px;text-align:center;font-size:9px;font-weight:bold;letter-spacing:-0.5px;text-indent:-0.5px;color:#2a2a2a">12</div>
<div class="a" style="left:771px;top:91px;width:2px;height:2px;background:#666"></div>
<div class="a" style="left:782px;top:90px;width:1px;height:4px;background:#000"></div>
<div class="a" style="left:790px;top:91px;width:2px;height:2px;background:#666"></div>
<div class="tx" style="left:785.50px;top:87.35px;width:30px;text-align:center;font-size:9px;font-weight:bold;letter-spacing:-0.5px;text-indent:-0.5px;color:#2a2a2a">13</div>
<div class="a" style="left:809px;top:91px;width:2px;height:2px;background:#666"></div>
<div class="a" style="left:819px;top:90px;width:1px;height:4px;background:#000"></div>
<div class="a" style="left:828px;top:91px;width:2px;height:2px;background:#666"></div>
<div class="tx" style="left:823.10px;top:87.35px;width:30px;text-align:center;font-size:9px;font-weight:bold;letter-spacing:-0.5px;text-indent:-0.5px;color:#2a2a2a">14</div>
<div class="a" style="left:846px;top:91px;width:2px;height:2px;background:#666"></div>
<div class="a" style="left:857px;top:90px;width:1px;height:4px;background:#000"></div>
<div class="a" style="left:865px;top:91px;width:2px;height:2px;background:#666"></div>
<div class="tx" style="left:860.70px;top:87.35px;width:30px;text-align:center;font-size:9px;font-weight:bold;letter-spacing:-0.5px;text-indent:-0.5px;color:#2a2a2a">15</div>
<div class="a" style="left:884px;top:91px;width:2px;height:2px;background:#666"></div>
<div class="a" style="left:894px;top:90px;width:1px;height:4px;background:#000"></div>
<div class="a" style="left:903px;top:91px;width:2px;height:2px;background:#666"></div>
<div class="tx" style="left:898.30px;top:87.35px;width:30px;text-align:center;font-size:9px;font-weight:bold;letter-spacing:-0.5px;text-indent:-0.5px;color:#2a2a2a">16</div>
<div class="a" style="left:922px;top:91px;width:2px;height:2px;background:#666"></div>
<div class="a" style="left:932px;top:90px;width:1px;height:4px;background:#000"></div>
<div class="a" style="left:940px;top:91px;width:2px;height:2px;background:#666"></div>
<div class="tx" style="left:935.90px;top:87.35px;width:30px;text-align:center;font-size:9px;font-weight:bold;letter-spacing:-0.5px;text-indent:-0.5px;color:#2a2a2a">17</div>
<div class="a" style="left:959px;top:91px;width:2px;height:2px;background:#666"></div>
<div class="a" style="left:970px;top:90px;width:1px;height:4px;background:#000"></div>
<div class="a" style="left:978px;top:91px;width:2px;height:2px;background:#666"></div>
<div class="tx" style="left:973.50px;top:87.35px;width:30px;text-align:center;font-size:9px;font-weight:bold;letter-spacing:-0.5px;text-indent:-0.5px;color:#2a2a2a">18</div>
<div class="a" style="left:997px;top:91px;width:2px;height:2px;background:#666"></div>
<div class="a" style="left:1007px;top:90px;width:1px;height:4px;background:#000"></div>
<div class="a" style="left:1016px;top:91px;width:2px;height:2px;background:#666"></div>
<div class="tx" style="left:1011.10px;top:87.35px;width:30px;text-align:center;font-size:9px;font-weight:bold;letter-spacing:-0.5px;text-indent:-0.5px;color:#2a2a2a">19</div>
<div class="a" style="left:1034px;top:91px;width:2px;height:2px;background:#666"></div>
<div class="a" style="left:232px;top:117px;width:2px;height:1px;background:#000"></div>
<div class="a" style="left:231px;top:126px;width:5px;height:1px;background:#000"></div>
<div class="a" style="left:232px;top:136px;width:2px;height:1px;background:#000"></div>
<div class="tx" style="left:218px;top:140.20px;width:30px;height:10px;text-align:center;font-size:9px;font-weight:bold;letter-spacing:-0.5px;text-indent:-0.5px;color:#2a2a2a;transform-origin:15px 5px;transform:rotate(-90deg)">1</div>
<div class="a" style="left:232px;top:155px;width:2px;height:1px;background:#000"></div>
<div class="a" style="left:231px;top:164px;width:5px;height:1px;background:#000"></div>
<div class="a" style="left:232px;top:173px;width:2px;height:1px;background:#000"></div>
<div class="a" style="left:232px;top:191px;width:2px;height:1px;background:#000"></div>
<div class="a" style="left:231px;top:200px;width:5px;height:1px;background:#000"></div>
<div class="a" style="left:232px;top:209px;width:2px;height:1px;background:#000"></div>
<div class="tx" style="left:218px;top:213.80px;width:30px;height:10px;text-align:center;font-size:9px;font-weight:bold;letter-spacing:-0.5px;text-indent:-0.5px;color:#2a2a2a;transform-origin:15px 5px;transform:rotate(-90deg)">1</div>
<div class="a" style="left:232px;top:228px;width:2px;height:1px;background:#000"></div>
<div class="a" style="left:231px;top:238px;width:5px;height:1px;background:#000"></div>
<div class="a" style="left:232px;top:247px;width:2px;height:1px;background:#000"></div>
<div class="tx" style="left:218px;top:251.40px;width:30px;height:10px;text-align:center;font-size:9px;font-weight:bold;letter-spacing:-0.5px;text-indent:-0.5px;color:#2a2a2a;transform-origin:15px 5px;transform:rotate(-90deg)">2</div>
<div class="a" style="left:232px;top:266px;width:2px;height:1px;background:#000"></div>
<div class="a" style="left:231px;top:275px;width:5px;height:1px;background:#000"></div>
<div class="a" style="left:232px;top:285px;width:2px;height:1px;background:#000"></div>
<div class="tx" style="left:218px;top:289.00px;width:30px;height:10px;text-align:center;font-size:9px;font-weight:bold;letter-spacing:-0.5px;text-indent:-0.5px;color:#2a2a2a;transform-origin:15px 5px;transform:rotate(-90deg)">3</div>
<div class="a" style="left:232px;top:303px;width:2px;height:1px;background:#000"></div>
<div class="a" style="left:231px;top:313px;width:5px;height:1px;background:#000"></div>
<div class="a" style="left:232px;top:322px;width:2px;height:1px;background:#000"></div>
<div class="tx" style="left:218px;top:326.60px;width:30px;height:10px;text-align:center;font-size:9px;font-weight:bold;letter-spacing:-0.5px;text-indent:-0.5px;color:#2a2a2a;transform-origin:15px 5px;transform:rotate(-90deg)">4</div>
<div class="a" style="left:232px;top:341px;width:2px;height:1px;background:#000"></div>
<div class="a" style="left:231px;top:350px;width:5px;height:1px;background:#000"></div>
<div class="a" style="left:232px;top:360px;width:2px;height:1px;background:#000"></div>
<div class="tx" style="left:218px;top:364.20px;width:30px;height:10px;text-align:center;font-size:9px;font-weight:bold;letter-spacing:-0.5px;text-indent:-0.5px;color:#2a2a2a;transform-origin:15px 5px;transform:rotate(-90deg)">5</div>
<div class="a" style="left:232px;top:379px;width:2px;height:1px;background:#000"></div>
<div class="a" style="left:231px;top:388px;width:5px;height:1px;background:#000"></div>
<div class="a" style="left:232px;top:397px;width:2px;height:1px;background:#000"></div>
<div class="tx" style="left:218px;top:401.80px;width:30px;height:10px;text-align:center;font-size:9px;font-weight:bold;letter-spacing:-0.5px;text-indent:-0.5px;color:#2a2a2a;transform-origin:15px 5px;transform:rotate(-90deg)">6</div>
<div class="a" style="left:232px;top:416px;width:2px;height:1px;background:#000"></div>
<div class="a" style="left:231px;top:426px;width:5px;height:1px;background:#000"></div>
<div class="a" style="left:232px;top:435px;width:2px;height:1px;background:#000"></div>
<div class="tx" style="left:218px;top:439.40px;width:30px;height:10px;text-align:center;font-size:9px;font-weight:bold;letter-spacing:-0.5px;text-indent:-0.5px;color:#2a2a2a;transform-origin:15px 5px;transform:rotate(-90deg)">7</div>
<div class="a" style="left:232px;top:454px;width:2px;height:1px;background:#000"></div>
<div class="a" style="left:231px;top:463px;width:5px;height:1px;background:#000"></div>
<div class="a" style="left:232px;top:473px;width:2px;height:1px;background:#000"></div>
<div class="tx" style="left:218px;top:477.00px;width:30px;height:10px;text-align:center;font-size:9px;font-weight:bold;letter-spacing:-0.5px;text-indent:-0.5px;color:#2a2a2a;transform-origin:15px 5px;transform:rotate(-90deg)">8</div>
<div class="a" style="left:232px;top:491px;width:2px;height:1px;background:#000"></div>
<div class="a" style="left:231px;top:501px;width:5px;height:1px;background:#000"></div>
<div class="a" style="left:232px;top:510px;width:2px;height:1px;background:#000"></div>
<div class="tx" style="left:218px;top:514.60px;width:30px;height:10px;text-align:center;font-size:9px;font-weight:bold;letter-spacing:-0.5px;text-indent:-0.5px;color:#2a2a2a;transform-origin:15px 5px;transform:rotate(-90deg)">9</div>
<div class="a" style="left:232px;top:529px;width:2px;height:1px;background:#000"></div>
<div class="a" style="left:231px;top:538px;width:5px;height:1px;background:#000"></div>
<div class="a" style="left:232px;top:548px;width:2px;height:1px;background:#000"></div>
<div class="tx" style="left:218px;top:552.20px;width:30px;height:10px;text-align:center;font-size:9px;font-weight:bold;letter-spacing:-0.5px;text-indent:-0.5px;color:#2a2a2a;transform-origin:15px 5px;transform:rotate(-90deg)">10</div>
<div class="a" style="left:232px;top:567px;width:2px;height:1px;background:#000"></div>
<div class="a" style="left:231px;top:576px;width:5px;height:1px;background:#000"></div>
<div class="a" style="left:232px;top:585px;width:2px;height:1px;background:#000"></div>
<div class="tx" style="left:218px;top:589.80px;width:30px;height:10px;text-align:center;font-size:9px;font-weight:bold;letter-spacing:-0.5px;text-indent:-0.5px;color:#2a2a2a;transform-origin:15px 5px;transform:rotate(-90deg)">11</div>
<div class="a" style="left:232px;top:604px;width:2px;height:1px;background:#000"></div>
<div class="a" style="left:231px;top:614px;width:5px;height:1px;background:#000"></div>
<div class="a" style="left:232px;top:623px;width:2px;height:1px;background:#000"></div>
<div class="tx" style="left:218px;top:627.40px;width:30px;height:10px;text-align:center;font-size:9px;font-weight:bold;letter-spacing:-0.5px;text-indent:-0.5px;color:#2a2a2a;transform-origin:15px 5px;transform:rotate(-90deg)">12</div>
<div class="a" style="left:232px;top:642px;width:2px;height:1px;background:#000"></div>
<div class="a" style="left:231px;top:651px;width:5px;height:1px;background:#000"></div>
<div class="a" style="left:232px;top:661px;width:2px;height:1px;background:#000"></div>
<div class="tx" style="left:218px;top:665.00px;width:30px;height:10px;text-align:center;font-size:9px;font-weight:bold;letter-spacing:-0.5px;text-indent:-0.5px;color:#2a2a2a;transform-origin:15px 5px;transform:rotate(-90deg)">13</div>
<div class="a" style="left:232px;top:679px;width:2px;height:1px;background:#000"></div>
<svg class="a" style="left:0;top:0" width="1065" height="110">
 <!-- indent markers -->
 <path d="M308.5,81.5 H317 L312.8,89 Z" fill="#f0f0f0" stroke="#000" stroke-width="1"/>
 <path d="M312.8,89.8 L317,95.5 H308.5 Z" fill="#d8d8d8" stroke="#000" stroke-width="1"/>
 <rect x="308.5" y="96.5" width="8.5" height="5.5" fill="#f0f0f0" stroke="#000" stroke-width="1"/>
 <path d="M972.5,89.5 L977,95.5 H968.5 Z" fill="#d8d8d8" stroke="#000" stroke-width="1"/>
</svg>


<!-- doc area -->
<div class="a" style="left:244px;top:102px;width:793px;height:583px;background:#fff"></div>
<div class="a" style="left:244px;top:102px;width:793px;height:2px;background:#2a2a2a"></div>
<div class="a" style="left:245px;top:104px;width:792px;height:3px;background:#858585"></div>
<div class="a" style="left:249px;top:107px;width:788px;height:1px;background:#000"></div>
<div class="a" style="left:244px;top:102px;width:1px;height:583px;background:#000"></div>
<div class="a" style="left:245px;top:104px;width:4px;height:581px;background:#858585"></div>
<div class="a" style="left:249px;top:107px;width:1px;height:578px;background:#000"></div>
<div class="a" style="left:1036px;top:102px;width:1px;height:583px;background:#000"></div>

<!-- page content guides -->
<div class="a" style="left:311px;top:181px;width:2px;height:504px;background:#e0e0e0"></div>
<div class="a" style="left:972px;top:181px;width:2px;height:504px;background:#e0e0e0"></div>
<div class="a" style="left:311px;top:181px;width:663px;height:1px;background:#c8c8c8"></div>
<div class="a" style="left:312px;top:320px;width:661px;height:1px;background:#000"></div>

<!-- vscroll -->
<div class="a" style="left:1037px;top:84px;width:17px;height:1px;background:#000"></div>
<div class="a" style="left:1053px;top:80px;width:1px;height:5px;background:#000"></div>
<div class="a" style="left:1038px;top:101px;width:15px;height:295px;background:#cdcdcd"></div>
<svg class="a" style="left:0;top:0" width="1065" height="732">
 <g fill="none" stroke="#606060" stroke-width="2">
  <polyline points="1042.5,96 1045.8,92.5 1049,96"/>
  <polyline points="1042.5,675.5 1045.8,679 1049,675.5"/>
  <polyline points="236,690.5 232.5,693.8 236,697"/>
  <polyline points="1028,690.5 1031.5,693.8 1028,697"/>
 </g>
</svg>
<!-- hscroll -->
<div class="a" style="left:243px;top:686px;width:775px;height:15px;background:#cdcdcd"></div>

<!-- status bar -->
<div class="a" style="left:221px;top:701px;width:833px;height:1px;background:#fff"></div>
<div class="a" style="left:221px;top:702px;width:833px;height:1px;background:#a0a0a0"></div>
<div class="a" style="left:225px;top:705px;width:139px;height:15px;border:1px solid #a0a0a0;border-right-color:#fff;border-bottom-color:#fff"></div>
<div class="a" style="left:368px;top:705px;width:140px;height:15px;border:1px solid #a0a0a0;border-right-color:#fff;border-bottom-color:#fff"></div>
<div class="a" style="left:986px;top:705px;width:31px;height:15px;border:1px solid #a0a0a0;border-right-color:#fff;border-bottom-color:#fff"></div>
<div class="a" style="left:1020px;top:705px;width:31px;height:15px;border:1px solid #a0a0a0;border-right-color:#fff;border-bottom-color:#fff"></div>

<div class="a" style="left:225px;top:685px;width:1px;height:17px;background:#000"></div>
<div class="a" style="left:221px;top:701px;width:5px;height:1px;background:#000"></div>
<div class="a" style="left:222px;top:686px;width:3px;height:15px;background:#fff"></div>
<div class="tx" style="left:83.00px;top:8.65px;font-size:15.71px;font-weight:bold;color:#0070c0;">Menu bar</div>
<div class="tx" style="left:91.30px;top:43.65px;font-size:15.71px;font-weight:bold;color:#0070c0;transform:scaleX(0.9433);">Toolbars</div>
<div class="tx" style="left:106.68px;top:78.65px;font-size:15.71px;font-weight:bold;color:#0070c0;transform:scaleX(0.9202);">Rulers</div>
<div class="tx" style="left:23.03px;top:172.65px;font-size:15.71px;font-weight:bold;color:#0070c0;transform:scaleX(0.9705);">Horizontal margin</div>
<div class="tx" style="left:83.20px;top:368.65px;font-size:15.71px;font-weight:bold;color:#0070c0;transform:scaleX(0.9785);">Text area</div>
<div class="tx" style="left:81.20px;top:657.65px;font-size:15.71px;font-weight:bold;color:#0070c0;transform:scaleX(0.9026);">Scroll bars</div>
<div class="tx" style="left:237.80px;top:11.80px;font-size:12px;font-weight:normal;color:#000;transform:scaleX(0.8646);">File</div>
<div class="tx" style="left:267.30px;top:11.80px;font-size:12px;font-weight:normal;color:#000;transform:scaleX(0.9042);">Edit</div>
<div class="tx" style="left:297.40px;top:11.80px;font-size:12px;font-weight:normal;color:#000;transform:scaleX(0.9683);">View</div>
<div class="tx" style="left:333.65px;top:11.80px;font-size:12px;font-weight:normal;color:#000;transform:scaleX(0.9536);">Insert</div>
<div class="tx" style="left:375.40px;top:11.80px;font-size:12px;font-weight:normal;color:#000;transform:scaleX(0.8999);">Style</div>
<div class="tx" style="left:413.50px;top:11.80px;font-size:12px;font-weight:normal;color:#000;transform:scaleX(0.9459);">Colors</div>
<div class="tx" style="left:458.80px;top:11.80px;font-size:12px;font-weight:normal;color:#000;transform:scaleX(0.9573);">Paragraph</div>
<div class="tx" style="left:524.40px;top:11.80px;font-size:12px;font-weight:normal;color:#000;transform:scaleX(0.9723);">Format</div>
<div class="tx" style="left:573.40px;top:11.80px;font-size:12px;font-weight:normal;color:#000;transform:scaleX(1.0031);">Tools</div>
<div class="tx" style="left:234.60px;top:60.80px;font-size:12px;font-weight:normal;color:#000;transform:scaleX(1.0130);">Normal</div>
<div class="tx" style="left:380.90px;top:60.80px;font-size:12px;font-weight:normal;color:#000;">Arial</div>
<div class="tx" style="left:529.00px;top:60.80px;font-size:12px;font-weight:normal;color:#000;transform:scaleX(0.8045);">16</div>
<div class="tx" style="left:625.10px;top:34.80px;font-size:12px;font-weight:normal;color:#000;transform:scaleX(0.8797);">100</div>
<div class="tx" style="left:230.50px;top:706.80px;font-size:12px;font-weight:normal;color:#000;transform:scaleX(0.8629);">Page 1</div>
<div class="tx" style="left:290.60px;top:706.80px;font-size:12px;font-weight:normal;color:#000;transform:scaleX(0.8408);">1/1</div>
<div class="tx" style="left:373.50px;top:706.80px;font-size:12px;font-weight:normal;color:#000;transform:scaleX(0.9267);">Line 1, Col 11</div>
<div class="tx" style="left:988.00px;top:706.80px;font-size:12px;font-weight:normal;color:#000;transform:scaleX(0.9842);">NUM</div>
<div class="tx" style="left:1020.80px;top:706.80px;font-size:12px;font-weight:normal;color:#707070;transform:scaleX(0.8570);">CAPS</div>
<div class="tx" style="left:581.83px;top:183.78px;font-size:21.43px;font-weight:bold;color:#000;transform:scaleX(0.9731);">DR J SMITH</div>
<div class="tx" style="left:560.10px;top:207.98px;font-size:11.43px;font-weight:normal;color:#000;transform:scaleX(0.9268);">B SC, MBBS(HONS), FRANZCOG</div>
<div class="tx" style="left:573.90px;top:222.42px;font-size:18.57px;font-weight:bold;color:#000;transform:scaleX(0.9790);">OBSTETRICIAN</div>
<div class="tx" style="left:531.20px;top:243.98px;font-size:11.43px;font-weight:normal;color:#000;transform:scaleX(0.9325);">BABIESDELIVERED LTD ABN 11 222 333 444</div>
<div class="tx" style="left:313.90px;top:271.28px;font-size:11.43px;font-weight:normal;color:#000;transform:scaleX(0.9332);">Suite 1, 1 Swann Road</div>
<div class="tx" style="left:314.00px;top:284.78px;font-size:11.43px;font-weight:normal;color:#000;transform:scaleX(0.9356);">Taringa QLD 4068</div>
<div class="tx" style="left:797.00px;top:271.28px;font-size:11.43px;font-weight:bold;color:#000;transform:scaleX(0.9217);">All appointments Ph: 07 3870 4085</div>
<div class="tx" style="left:689.30px;top:284.78px;font-size:11.43px;font-weight:bold;color:#000;transform:scaleX(0.9308);">All invoice payments to PO Box 100 Brisbane QLD 4000</div>
<div class="tx" style="left:312.70px;top:343.68px;font-size:12.14px;font-weight:normal;color:#000;transform:scaleX(1.0625);">Thu, 02 Aug 2018</div>
<div class="tx" style="left:312.90px;top:397.68px;font-size:12.14px;font-weight:bold;color:#000;transform:scaleX(1.0699);">Dr Andrew Demo</div>
<div class="tx" style="left:312.90px;top:415.68px;font-size:12.14px;font-weight:bold;color:#000;transform:scaleX(1.0222);">Genie Solutions</div>
<div class="tx" style="left:312.90px;top:433.68px;font-size:12.14px;font-weight:bold;color:#000;transform:scaleX(1.0218);">1 Swann Rd</div>
<div class="tx" style="left:312.90px;top:451.68px;font-size:12.14px;font-weight:bold;color:#000;transform:scaleX(1.0278);">Taringa QLD 4068</div>
<div class="tx" style="left:312.90px;top:505.18px;font-size:12.14px;font-weight:bold;color:#000;transform:scaleX(1.0744);">Dear Dr Demo,</div>
<div class="tx" style="left:312.90px;top:540.68px;font-size:12.14px;font-weight:bold;color:#000;transform:scaleX(0.9625);">RE:</div>
<div class="tx" style="left:425.00px;top:540.68px;font-size:12.14px;font-weight:bold;color:#000;transform:scaleX(1.0823);">Mrs Betty Ackfield - DOB: 04/09/68</div>
<div class="tx" style="left:425.00px;top:558.68px;font-size:12.14px;font-weight:bold;color:#000;transform:scaleX(1.0424);">66 Baker St  Indooroopilly QLD 4068</div>
<div class="tx" style="left:312.90px;top:594.68px;font-size:12.14px;font-weight:normal;color:#000;transform:scaleX(1.1035);">Thank you for referring this 49 year old lady</div>
<div class="tx" style="left:311.85px;top:629.68px;font-size:12.14px;font-weight:normal;color:#000;transform:scaleX(1.0475);">Regards,</div>

<!-- annotation arrows -->
<svg class="a" style="left:0;top:0" width="1065" height="732">
 <g stroke="#0070c0" stroke-width="1.2" fill="none">
  <line x1="165.5" y1="16.3" x2="200" y2="16.3"/>
  <line x1="165.5" y1="52.6" x2="200" y2="52.6"/>
  <line x1="165.5" y1="87.5" x2="200" y2="87.5"/>
  <line x1="165.5" y1="87.5" x2="199" y2="117"/>
  <line x1="165.5" y1="182.3" x2="217" y2="182.3"/>
  <line x1="165.5" y1="377.5" x2="291" y2="377.5"/>
  <line x1="165.5" y1="663.6" x2="1011" y2="663.6"/>
  <line x1="165.5" y1="663.6" x2="199" y2="688.5"/>
 </g>
 <g fill="#0070c0">
  <polygon points="208.2,16.3 198,11.3 198,21.3"/>
  <polygon points="208.2,52.6 198,47.6 198,57.6"/>
  <polygon points="208.2,87.5 198,82.5 198,92.5"/>
  <polygon points="204.9,122.6 193.8,119.6 200.6,111.8"/>
  <polygon points="225.4,182.3 215.2,177.3 215.2,187.3"/>
  <polygon points="299.5,377.5 289.3,372.5 289.3,382.5"/>
  <polygon points="1020.3,663.6 1010.1,658.6 1010.1,668.6"/>
  <polygon points="205.3,694 194.3,691.6 200.3,683.9"/>
 </g>
</svg>
</body></html>
